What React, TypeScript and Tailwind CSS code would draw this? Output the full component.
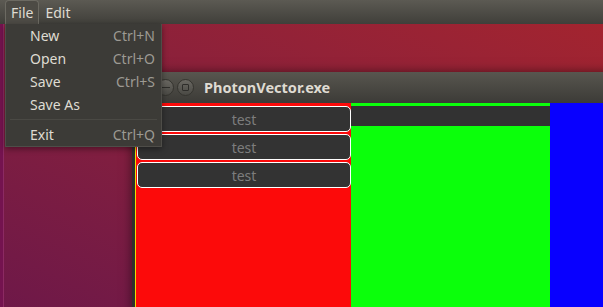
import React from 'react';

const menuItems = [
  { label: 'New', shortcut: 'Ctrl+N' },
  { label: 'Open', shortcut: 'Ctrl+O' },
  { label: 'Save', shortcut: 'Ctrl+S' },
  { label: 'Save As', shortcut: '' },
];

const TitleButton = ({ kind }: { kind: 'close' | 'min' | 'max' }) => (
  <div className="w-[17px] h-[17px] rounded-full bg-linear-to-b from-[#6a6862] to-[#4a4944] border border-[#35342f] flex items-center justify-center">
    {kind === 'min' && <div className="w-[8px] h-[1.5px] bg-[#2e2d2a]" />}
    {kind === 'max' && <div className="w-[7px] h-[7px] border border-[#2e2d2a] rounded-[1px]" />}
    {kind === 'close' && <div className="w-[7px] h-[1.5px] bg-[#2e2d2a] rotate-45" />}
  </div>
);

const TestButton = () => (
  <div className="h-[26px] rounded-[5px] border-[1.5px] border-white bg-[#333333] flex items-center justify-center text-[14px] text-[#7d7d7d]">
    test
  </div>
);

export default function App() {
  return (
    <div className="relative w-[603px] h-[307px] overflow-hidden flex flex-col font-['Noto_Sans','DejaVu_Sans',sans-serif]">
      {/* top menu bar */}
      <div className="h-[24px] shrink-0 flex items-stretch bg-linear-to-b from-[#5c5a53] to-[#403f3a] text-[14px] text-[#dfdbd2]">
        <div className="ml-[5px] px-[5px] flex items-center rounded-t-[4px] border border-b-0 border-[#6c6a62] bg-[#4d4b45]">File</div>
        <div className="ml-[6px] flex items-center">Edit</div>
      </div>

      {/* desktop */}
      <div className="relative flex-1 flex bg-linear-to-bl from-[#a3242f] via-[#87203c] to-[#6e1848]">
        <div className="w-[4px] bg-[#74134f] border-r border-[#8c2a62]" />

        {/* window */}
        <div className="absolute left-[132px] top-[48px] w-[480px] h-[240px] flex flex-col bg-[#2f2f2d] shadow-[0_0_10px_rgba(0,0,0,0.5)]">
          <div className="h-[31px] shrink-0 flex items-center gap-[3px] pl-[5px] bg-linear-to-b from-[#58564f] to-[#3c3b37]">
            <TitleButton kind="close" />
            <TitleButton kind="min" />
            <TitleButton kind="max" />
            <div className="ml-[7px] text-[14.5px] font-bold text-[#dfdbd2]">PhotonVector.exe</div>
          </div>
          <div className="flex-1 flex pl-[3px]">
            <div className="w-[1px] bg-[#e8e000]" />
            <div className="w-[215px] bg-[#fc0a0a] pt-[3px] pl-[1px] flex flex-col gap-[2px]">
              <TestButton />
              <TestButton />
              <TestButton />
            </div>
            <div className="w-[199px] bg-[#0bff0b] pt-[3px]">
              <div className="h-[20px] bg-[#323232]" />
            </div>
            <div className="flex-1 bg-[#0800ff]" />
          </div>
        </div>
      </div>

      {/* dropdown menu */}
      <div className="absolute left-[5px] top-[24px] w-[157px] h-[123px] bg-[#3c3b37] border border-t-0 border-[#4e4d48] shadow-[0_2px_6px_rgba(0,0,0,0.4)] text-[14px] leading-[20px]">
        {menuItems.map((item) => (
          <div key={item.label} className="h-[23px] flex items-center justify-between pl-[24px] pr-[6px]">
            <span className="text-[#dfdbd2]">{item.label}</span>
            <span className="text-[#9d9a93]">{item.shortcut}</span>
          </div>
        ))}
        <div className="mx-[4px] my-[3px] h-px bg-[#2c2b28] border-b border-[#4a4944]" />
        <div className="h-[23px] flex items-center justify-between pl-[24px] pr-[6px]">
          <span className="text-[#dfdbd2]">Exit</span>
          <span className="text-[#9d9a93]">Ctrl+Q</span>
        </div>
      </div>
    </div>
  );
}
